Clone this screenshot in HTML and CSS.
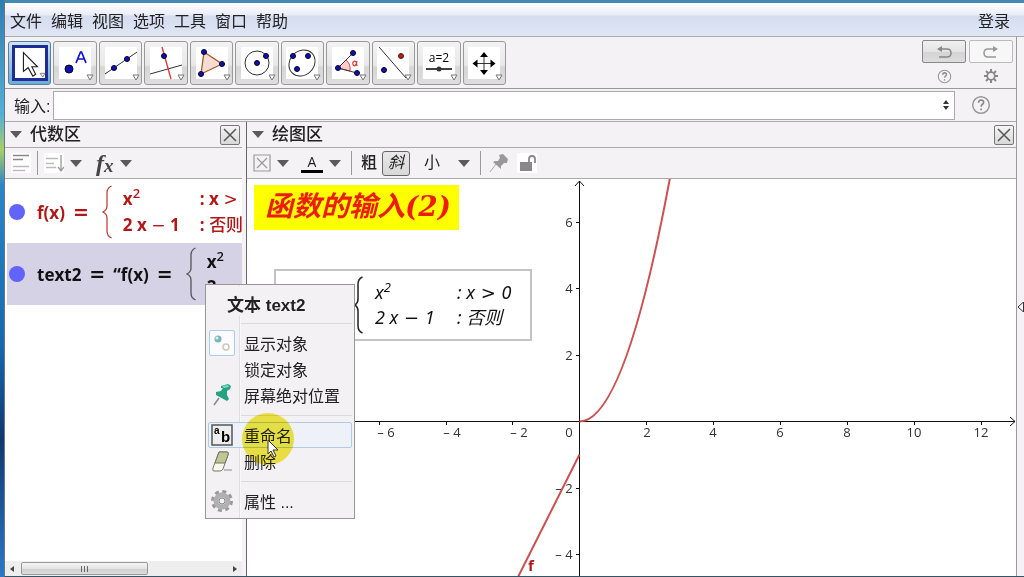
FILE: index.html
```html
<!DOCTYPE html>
<html lang="zh-CN">
  <head>
    <meta charset="UTF-8" />
    <meta name="viewport" content="width=device-width, initial-scale=1.0"/>
    <title>GeoGebra</title>
    <link rel="stylesheet" href="styles.css">
  </head>
  <body>
    <div class="window">
      <nav class="menubar">
        <button>文件</button>
        <button>编辑</button>
        <button>视图</button>
        <button>选项</button>
        <button>工具</button>
        <button>窗口</button>
        <button>帮助</button>
        <button class="login">登录</button>
      </nav>

      <div class="main">
        <div class="workspace">
          <div class="toolbar">
            <div class="tools">
              <button class="tool active" aria-label="移动">
                <svg viewBox="0 0 32 32"><path d="M9 5v20l5-4 5 9 3-2-4-8h6z" fill="#fff" stroke="#222" stroke-width="1.2"/><path class="more" d="M27 27h5l-2.500 4z"/></svg>
              </button>
              <button class="tool" aria-label="点">
                <svg viewBox="0 0 32 32"><circle class="pt" cx="10" cy="22" r="4"/><path d="M17 16l4.500-11h1l4.500 11M18.500 12h7" fill="none" stroke="#11c" stroke-width="1.700"/><path class="more" d="M28 28h6l-3 5z"/></svg>
              </button>
              <button class="tool" aria-label="直线">
                <svg viewBox="0 0 32 32"><path class="ln" d="M0 27L32 5"/><circle class="pt" cx="9" cy="21" r="2.500"/><circle class="pt" cx="22" cy="12" r="2.500"/><path class="more" d="M28 28h6l-3 5z"/></svg>
              </button>
              <button class="tool" aria-label="垂线">
                <svg viewBox="0 0 32 32"><path class="ln" d="M0 27L32 18"/><path d="M12 0l9 32" stroke="#d33" stroke-width="1.300"/><circle class="pt" cx="14" cy="9" r="2.500"/><path class="more" d="M28 28h6l-3 5z"/></svg>
              </button>
              <button class="tool" aria-label="多边形">
                <svg viewBox="0 0 32 32"><path d="M8 5l18 12L5 27z" fill="#f6ddd3" stroke="#a65a30" stroke-width="1.300"/><circle class="pt" cx="8" cy="5" r="2.500"/><circle class="pt" cx="26" cy="17" r="2.500"/><circle class="pt" cx="5" cy="27" r="2.500"/><path class="more" d="M28 28h6l-3 5z"/></svg>
              </button>
              <button class="tool" aria-label="圆">
                <svg viewBox="0 0 32 32"><circle class="ln" cx="16" cy="16" r="12"/><circle class="pt" cx="16" cy="16" r="2.500"/><circle class="pt" cx="25" cy="9" r="2.500"/><path class="more" d="M28 28h6l-3 5z"/></svg>
              </button>
              <button class="tool" aria-label="椭圆">
                <svg viewBox="0 0 32 32"><ellipse class="ln" cx="16" cy="16" rx="14" ry="12" transform="rotate(-45 16 16)"/><circle class="pt" cx="7" cy="9" r="2.500"/><circle class="pt" cx="22" cy="9" r="2.500"/><circle class="pt" cx="11" cy="22" r="2.500"/><path class="more" d="M28 28h6l-3 5z"/></svg>
              </button>
              <button class="tool" aria-label="角度">
                <svg viewBox="0 0 32 32"><path d="M6 21l8-8q5 4 4 11z" fill="#fcc" stroke="#d44"/><path class="ln" d="M21 6L6 21l19 5"/><circle class="pt" cx="21" cy="6" r="2.500"/><circle class="pt" cx="6" cy="21" r="2.500"/><circle class="pt" cx="25" cy="26" r="2.500"/><path d="M25 14q-1 6-3.500 4.500-2-3 1-4.500 2 0 2.500 5" fill="none" stroke="#d33" stroke-width="1.200"/><path class="more" d="M28 28h6l-3 5z"/></svg>
              </button>
              <button class="tool" aria-label="轴对称">
                <svg viewBox="0 0 32 32"><path class="ln" d="M2 0l27 31"/><circle class="pt" cx="7" cy="23" r="2.500"/><circle cx="24" cy="9" r="2.500" fill="#a22" stroke="#611"/><path class="more" d="M28 28h6l-3 5z"/></svg>
              </button>
              <button class="tool" aria-label="滑动条">
                <svg viewBox="0 0 32 32"><text class="slider-text" x="16" y="15" text-anchor="middle">a=2</text><path d="M3 22h26" stroke="#000" stroke-width="1.500"/><circle cx="16" cy="22" r="2.500" fill="#333"/><path class="more" d="M28 28h6l-3 5z"/></svg>
              </button>
              <button class="tool" aria-label="移动视图">
                <svg viewBox="0 0 32 32"><path d="M8 16.500h16M16 8v16" stroke="#333"/><path d="M16 5l4 5h-8zM16 28l4-5h-8zM4.500 16.500l5-4v8zM27.500 16.500l-5-4v8z" fill="#000"/><path class="more" d="M28 28h6l-3 5z"/></svg>
              </button>
            </div>
            <div class="side-tools">
              <button class="undo" aria-label="撤销"><svg width="18" height="14" viewBox="0 0 18 14"><path d="M5 4h7q4 0 4 4t-4 4H4" fill="none" stroke="#888" stroke-width="1.500"/><path d="M2 4l5-3v6z" fill="#888"/></svg></button>
              <button class="redo" aria-label="重做"><svg width="18" height="14" viewBox="0 0 18 14"><path d="M13 4H6Q2 4 2 8t4 4h8" fill="none" stroke="#999" stroke-width="1.500"/><path d="M16 4l-5-3v6z" fill="#999"/></svg></button>
              <button class="plain" aria-label="帮助"><svg width="15" height="15" viewBox="0 0 20 20"><use href="#help"/></svg></button>
              <button class="plain" aria-label="设置"><svg width="14" height="14" viewBox="0 0 14 14"><circle cx="7" cy="7" r="3.800" fill="none" stroke="#888" stroke-width="1.800"/><path d="M7 0v3M7 11v3M0 7h3M11 7h3M2 2l2.200 2.200M9.800 9.800L12 12M12 2L9.800 4.200M4.200 9.800L2 12" stroke="#888" stroke-width="2"/></svg></button>
            </div>
          </div>

          <form class="inputbar">
            <label for="command">输入:</label>
            <div class="field">
              <input type="text" id="command" />
              <svg width="6" height="12" viewBox="0 0 6 12"><path d="M0 5l3-4 3 4zM0 7h6l-3 4z" fill="#333"/></svg>
            </div>
            <button type="button" class="plain" aria-label="输入帮助">
              <svg width="20" height="20" viewBox="0 0 20 20"><g id="help"><circle cx="10" cy="10" r="8.300" fill="none" stroke="#999" stroke-width="1.500"/><path d="M7.500 7.800q.2-2.800 2.600-2.800 2.600.1 2.500 2.400 0 1.200-1.400 2.100-1 .7-1 2.200M10.100 13.500v1.800" fill="none" stroke="#888" stroke-width="1.700"/></g></svg>
            </button>
          </form>

          <div class="panels">
            <section class="algebra">
              <header class="panel-head">
                <span class="caret"></span>
                <h2>代数区</h2>
                <button class="close" aria-label="关闭"><svg width="14" height="14" viewBox="0 0 14 14"><path d="M1 1l12 12M13 1L1 13" stroke="#555" stroke-width="1.500"/></svg></button>
              </header>
              <div class="panel-tools">
                <button class="icon" aria-label="辅助对象"><svg width="20" height="20" viewBox="0 0 20 20"><path fill="#fff" d="M0 0h20v20H0z"/><path d="M2 2.500h16M2 6.500h10" stroke="#888" stroke-width="1.300"/><path d="M2 13.500h16M2 17.500h12" stroke="#bbb" stroke-width="1.300"/></svg></button>
                <span class="divider"></span>
                <button class="icon" aria-label="排序"><svg width="20" height="20" viewBox="0 0 20 20"><path fill="#fff" d="M0 0h20v20H0z"/><path d="M2 5.500h12M2 10.500h8M2 14.500h10" stroke="#bbb" stroke-width="1.300"/><path d="M17 2v15M14 14l3 4 3-4" fill="none" stroke="#999" stroke-width="1.300"/></svg></button>
                <span class="caret"></span>
                <button class="icon fx">f<sub>x</sub></button>
                <span class="caret"></span>
              </div>
              <div class="expressions">
                <div class="expr red">
                  <span class="marble"></span>
                  <span>f(x)</span><span class="eq">=</span>
                  <svg class="brace" width="10" height="54" viewBox="0 0 10 54"><path d="M9.500 1Q5 3 5 8v13q0 4-4 6 4 2 4 6v13q0 5 4.500 7" fill="none" stroke="#b33" stroke-width="1.200"/></svg>
                  <div class="cases">
                    <span>x<sup>2</sup></span><span>: x <i class="op">&gt;</i></span>
                    <span>2 x <i class="op">−</i> 1</span><span>: <b>否则</b></span>
                  </div>
                </div>
                <div class="expr selected">
                  <span class="marble"></span>
                  <span>text2</span><span class="eq">=</span>
                  <span>“f(x)</span><span class="eq">=</span>
                  <svg class="brace" width="10" height="54" viewBox="0 0 10 54"><path d="M9.500 1Q5 3 5 8v13q0 4-4 6 4 2 4 6v13q0 5 4.500 7" fill="none" stroke="#555" stroke-width="1.300"/></svg>
                  <div class="cases single">
                    <span>x<sup>2</sup></span>
                    <span>2</span>
                  </div>
                </div>
              </div>
              <div class="scrollbar">
                <svg width="4" height="8" viewBox="0 0 4 8"><path d="M4 1v6L0 4z" fill="#444"/></svg>
                <div class="track"><div class="thumb"><i></i></div></div>
                <svg width="4" height="8" viewBox="0 0 4 8"><path d="M0 1v6l4-3z" fill="#444"/></svg>
              </div>
            </section>

            <section class="graphics">
              <header class="panel-head">
                <span class="caret"></span>
                <h2>绘图区</h2>
                <button class="close" aria-label="关闭"><svg width="14" height="14" viewBox="0 0 14 14"><path d="M1 1l12 12M13 1L1 13" stroke="#555" stroke-width="1.500"/></svg></button>
              </header>
              <div class="panel-tools">
                <button class="icon" aria-label="背景颜色"><svg width="18" height="18" viewBox="0 0 18 18"><path d="M1 1h16v16H1zM4 4l10 10M14 4L4 14" fill="none" stroke="#999" stroke-width="1.200"/></svg></button>
                <span class="caret"></span>
                <button class="icon color">A</button>
                <span class="caret"></span>
                <span class="divider"></span>
                <button class="style-btn bold">粗</button>
                <button class="style-btn pressed">斜</button>
                <button class="style-btn size">小</button>
                <span class="caret"></span>
                <span class="divider"></span>
                <button class="icon pin" aria-label="固定"><svg width="20" height="20" viewBox="0 0 20 20"><path d="M10 2l4-1 5 5-1 4-3 0-3 3 0 3-8-7 2-1 3 0 2-3z" fill="#999"/><path d="M7 11l-6 8" stroke="#aaa"/></svg></button>
                <button class="icon" aria-label="锁定"><svg width="20" height="20" viewBox="0 0 20 20"><path fill="#fff" d="M0 0h20v20H0z"/><path d="M3 9h12v9H3z" fill="#888"/><path d="M12 9V6q0-3 3-3t3 3v4" fill="none" stroke="#888" stroke-width="1.800"/></svg></button>
              </div>
              <div class="canvas">
                <svg class="plot" viewBox="0 0 769 397" preserveAspectRatio="xMinYMin slice">
                  <g class="axes">
                    <path d="M0 242.500h768M332.500 2v395M763 238l5 4.500-5 4.500M328 7l4.500-5 4.500 5"/>
                    <path d="M132.500 242v4M199.500 242v4M265.500 242v4M399.500 242v4M466.500 242v4M533.500 242v4M600.500 242v4M667.500 242v4M734.500 242v4M329 43.500h4M329 109.500h4M329 176.500h4M329 309.500h4M329 375.500h4"/>
                  </g>
                  <g class="labels">
                    <text x="139" y="258">– 6</text>
                    <text x="205" y="258">– 4</text>
                    <text x="272" y="258">– 2</text>
                    <text x="322" y="258">0</text>
                    <text x="400" y="258">2</text>
                    <text x="466" y="258">4</text>
                    <text x="533" y="258">6</text>
                    <text x="600" y="258">8</text>
                    <text x="667" y="258">10</text>
                    <text x="734" y="258">12</text>
                    <text x="322" y="48">6</text>
                    <text x="322" y="114">4</text>
                    <text x="322" y="181">2</text>
                    <text x="317" y="314">– 2</text>
                    <text x="317" y="380">– 4</text>
                  </g>
                  <path class="curve" d="M332.500 242.500Q378 242.500 423.500-4M332.500 275.500L271 398"/>
                  <text class="fname" x="281" y="392">f</text>
                </svg>
                <div class="title-text">函数的输入(2)</div>
                <div class="formula">
                  <svg width="8" height="58" viewBox="0 0 8 58"><path d="M7.500 1Q3 3 3 8v15q0 4-3 6 3 2 3 6v15q0 5 4.500 7" fill="none" stroke="#222" stroke-width="1.500"/></svg>
                  <div class="cases">
                    <span>x<sup>2</sup></span><span>: x <i class="op">&gt;</i> 0</span>
                    <span>2 x <i class="op">−</i> 1</span><span>: 否则</span>
                  </div>
                </div>
              </div>
            </section>
          </div>
        </div>
        <button class="drawer" aria-label="侧栏"><svg width="7" height="10" viewBox="0 0 7 10"><path d="M6.500 0L1 5l5.500 5z" fill="#fff" stroke="#333"/></svg></button>
      </div>
    </div>

    <div class="context-menu">
      <h3>文本 text2</h3>
      <hr>
      <button class="item"><span class="item-icon checked"><svg width="24" height="24" viewBox="0 0 24 24"><circle cx="8" cy="8" r="3.500" fill="#7ab5b5"/><circle cx="7" cy="7" r="1.500" fill="#d5eeee"/><circle cx="16" cy="16" r="3" fill="#fff" stroke="#ccc8b8" stroke-width="1.500"/></svg></span>显示对象</button>
      <button class="item"><span class="item-icon"></span>锁定对象</button>
      <button class="item"><span class="item-icon"><svg width="24" height="24" viewBox="0 0 24 24"><path d="M9 15l-5 7" stroke="#888" stroke-width="1.500"/><path d="M11 3l7-2 3 2-1 3-3 2 0 4 2 4-2 2-11-6 0-3 5-1 2-3-2 0z" fill="#25a184"/><path d="M12 3l6-1 1 2-5 1z" fill="#7dd9c0"/></svg></span>屏幕绝对位置</button>
      <hr>
      <button class="item hover"><span class="item-icon"><svg width="22" height="22" viewBox="0 0 22 22"><path d="M1 1h20v20H1z" fill="#eee" stroke="#555" stroke-width="1.500"/><text class="ab" x="3" y="10">a</text><text class="ab big" x="10" y="18">b</text></svg></span>重命名</button>
      <button class="item"><span class="item-icon"><svg width="24" height="24" viewBox="0 0 24 24"><path d="M9 3h8q2 0 1 3l-5 14q-1 2-3 2H4q-2 0-1-3z" fill="#fafaf3" stroke="#77775c"/><path d="M9 3h8q2 0 1 3l-3 8H5z" fill="#bfc795" stroke="#77775c"/><path d="M14 21h8" stroke="#888"/></svg></span>删除</button>
      <hr>
      <button class="item"><span class="item-icon"><svg width="24" height="24" viewBox="0 0 24 24"><circle cx="12" cy="12" r="9.500" fill="none" stroke="#999" stroke-width="3" stroke-dasharray="4 3.460"/><circle cx="12" cy="12" r="6" fill="none" stroke="#b0b0b0" stroke-width="5"/><circle cx="12" cy="12" r="3" fill="#f4f1f5" stroke="#888"/></svg></span>属性 ...</button>
      <div class="click-spot"></div>
      <svg class="pointer" width="12" height="19" viewBox="0 0 12 19"><path d="M1 1v14l3-3 3 6 2-1-3-6h5z" fill="#fff" stroke="#333"/></svg>
    </div>
  </body>
</html>
```
FILE: styles.css
```css
* {
  box-sizing: border-box;
}

body {
  margin: 0;
  height: 100vh;
  overflow: hidden;
  font-family: "Liberation Sans", "Noto Sans CJK SC", sans-serif;
  font-size: 16px;
  color: #222;
  background: linear-gradient(#2f7db0, #55b0d8 20%, #a8d060 26%, #2a86c8 32%, #1668b0 60%, #103870 76%, #2a78c8);
}

button {
  font: inherit;
  color: inherit;
  padding: 0;
  border: none;
  background: none;
}

svg {
  display: block;
}

.window {
  height: 100vh;
  margin-left: 4px;
  border-top: 3px solid #4489b4;
  border-left: 1px solid #678;
  border-bottom: 1px solid #345566;
  background: #f5f2f6;
  display: flex;
  flex-direction: column;
}

.menubar {
  display: flex;
  align-items: center;
  gap: 9px;
  height: 34px;
  padding: 0 14px 0 5px;
  background: linear-gradient(#fff, #e9edf7 35%, #d5dcef 40%, #dfe7f5);
  border-bottom: 1px solid #aaa;
}

.login {
  margin-left: auto;
}

.main {
  flex: 1;
  display: flex;
  min-height: 0;
}

.workspace {
  flex: 1;
  min-width: 0;
  display: flex;
  flex-direction: column;
  border-right: 1px solid #999;
}

.drawer {
  width: 7px;
  display: flex;
  align-items: center;
}

/* toolbar */
.toolbar {
  display: flex;
  justify-content: space-between;
  height: 52px;
  padding: 3px 3px 0 3px;
  border-bottom: 1px solid #999;
}

.tools {
  display: grid;
  grid-template-columns: repeat(11, 1fr);
  gap: 2px;
  width: 498px;
  height: 44px;
  margin-top: 1px;
}

.tool {
  display: flex;
  align-items: center;
  justify-content: center;
  border: 1px solid #999;
  border-radius: 3px;
  background: linear-gradient(#f3f3f3, #e8e8e8 55%, #d6d6d6 60%, #dedede);
}

.tool svg {
  width: 32px;
  height: 32px;
  background: #fff;
  overflow: visible;
}

.tool.active {
  background: linear-gradient(#cfe4f3, #9cc6e4 50%, #6cadd8);
  border-color: #567f9c;
}

.tool.active svg {
  width: 36px;
  height: 36px;
  border: 3px solid #1e2c96;
}

.pt {
  fill: #11a;
  stroke: #003;
}

.ln {
  fill: none;
  stroke: #333;
}

.more {
  fill: #fff;
  stroke: #777;
}

.slider-text {
  font: 12px "Open Sans", sans-serif;
}

.side-tools {
  display: grid;
  grid-template-columns: 44px 44px;
  grid-template-rows: 23px 24px;
  gap: 1px 3px;
}

.undo,
.redo,
.plain {
  display: flex;
  align-items: center;
  justify-content: center;
}

.undo {
  border: 1px solid #888;
  border-radius: 2px;
  background: linear-gradient(#f0f0f0, #e4e4e4 50%, #d4d4d4 55%, #ddd);
}

.redo {
  border: 1px solid #bbb;
  border-radius: 2px;
  background: #f8f7f8;
}

/* input bar */
.inputbar {
  display: flex;
  align-items: center;
  height: 33px;
  padding-left: 9px;
  border-bottom: 1px solid #aaa;
}

.field {
  flex: 1;
  display: flex;
  align-items: center;
  height: 29px;
  margin-left: 3px;
  padding-right: 5px;
  background: #fff;
  border: 1px solid #aaa;
}

.field input {
  flex: 1;
  min-width: 0;
  height: 26px;
  border: none;
  outline: none;
  background: none;
  font: inherit;
}

.inputbar .plain {
  width: 61px;
  padding-right: 10px;
}

/* panels */
.panels {
  flex: 1;
  display: flex;
  min-height: 0;
}

.algebra {
  flex: 0 0 242px;
  min-width: 0;
  display: flex;
  flex-direction: column;
  padding-right: 4px;
  border-right: 1px solid #666;
}

.graphics {
  flex: 1;
  min-width: 0;
  display: flex;
  flex-direction: column;
}

.panel-head {
  display: flex;
  align-items: center;
  height: 26px;
  padding: 0 2px 0 5px;
  border-bottom: 1px solid #aaa;
}

.panel-head h2 {
  margin: 0 auto 0 8px;
  font-size: 17px;
  font-weight: 500;
  line-height: 24px;
}

.caret {
  width: 0;
  border: 6px solid transparent;
  border-top: 7px solid #5a5a5a;
  border-bottom: 0;
}

.close {
  width: 20px;
  height: 20px;
  display: flex;
  align-items: center;
  justify-content: center;
  border: 1px solid #777;
  border-radius: 2px;
  background: linear-gradient(#f4f4f4, #d8d8d8);
}

.panel-tools {
  display: flex;
  align-items: center;
  gap: 6px;
  height: 31px;
  padding: 0 6px;
  border-bottom: 1px solid #aaa;
}

.divider {
  width: 1px;
  height: 24px;
  background: #999;
}

.fx {
  margin-left: 8px;
  font: italic bold 24px/28px "Liberation Serif", serif;
  color: #444;
}

.fx sub {
  font-size: 19px;
  line-height: 0;
  vertical-align: -1px;
}

.color {
  width: 22px;
  margin-left: 6px;
  border-bottom: 3px solid #000;
  font: 14px/16px "Open Sans", sans-serif;
}

.color + .caret {
  margin-right: 4px;
}

.style-btn {
  width: 28px;
  height: 25px;
  line-height: 22px;
  font-size: 16px;
}

.bold {
  width: 22px;
  font-weight: 500;
}

.pressed {
  font-style: italic;
  border: 1px solid #666;
  border-radius: 3px;
  background: linear-gradient(#e8e8e8, #d8d8d8);
  margin-left: -4px;
}

.size {
  margin: 0 6px 0 2px;
}

.size + .caret {
  margin-right: 4px;
}

.pin {
  margin: 0 2px;
}

/* algebra view */
.expressions {
  flex: 1;
  overflow: hidden;
  padding: 2px 0 0 2px;
  background: #fff;
  font-family: "Open Sans", "Noto Sans CJK SC", sans-serif;
  font-size: 17px;
  font-weight: bold;
  color: #111;
}

.expr {
  display: flex;
  align-items: center;
  height: 62px;
  padding-left: 2px;
  white-space: nowrap;
}

.red {
  color: #b01818;
}

.selected {
  background: #d5d2e5;
}

.marble {
  flex: none;
  width: 16px;
  height: 16px;
  margin-right: 12px;
  border-radius: 50%;
  background: #6163fa;
}

.eq {
  margin: 0 8px;
  font-family: "DejaVu Sans", sans-serif;
  font-size: 19px;
}

.op {
  font-family: "DejaVu Sans", sans-serif;
  font-style: normal;
  font-weight: normal;
}

.brace {
  flex: none;
  margin-left: 5px;
}

.cases {
  display: grid;
  grid-template-columns: 77px auto;
  margin-left: 11px;
  line-height: 25px;
}

.cases.single {
  grid-template-columns: auto;
}

.cases b {
  font-weight: 500;
}

sup {
  font-size: 13px;
  font-weight: 600;
  line-height: 0;
}

.scrollbar {
  display: flex;
  align-items: center;
  gap: 7px;
  height: 15px;
  padding: 0 5px;
  background: #eee;
}

.track {
  flex: 1;
}

.thumb {
  width: 62%;
  height: 13px;
  border: 1px solid #999;
  border-radius: 2px;
  background: linear-gradient(#f5f5f5, #e4e4e4 50%, #d0d0d0 55%, #ddd);
  display: flex;
  align-items: center;
  justify-content: center;
}

.thumb i {
  width: 7px;
  height: 6px;
  background: repeating-linear-gradient(90deg, #666 0 1px, transparent 1px 3px);
}

/* graphics view */
.canvas {
  flex: 1;
  min-height: 0;
  position: relative;
  overflow: hidden;
  background: #fff;
}

.plot {
  width: 100%;
  height: 100%;
}

.axes path {
  fill: none;
  stroke: #111;
}

.labels {
  font: 13px "Open Sans", sans-serif;
  fill: #333;
  text-anchor: middle;
}

.curve {
  fill: none;
  stroke: #cc5050;
  stroke-width: 2;
}

.fname {
  font: bold 15px "Open Sans", sans-serif;
  fill: #b01818;
}

.title-text {
  position: absolute;
  left: 7px;
  top: 6px;
  height: 45px;
  padding: 0 8px 0 11px;
  background: #ff0;
  color: #ee1c0c;
  font: italic bold 28px/43px "DejaVu Serif", "Noto Sans CJK SC", serif;
  white-space: nowrap;
}

.formula {
  position: absolute;
  left: 27px;
  top: 90px;
  width: 258px;
  height: 72px;
  padding-left: 79px;
  display: flex;
  align-items: center;
  border: 2px solid #c4c4c4;
  background: #fff;
  color: #111;
  font: italic 18px "Noto Sans", "Noto Sans CJK SC", sans-serif;
  white-space: nowrap;
}

.formula .cases {
  grid-template-columns: 82px auto;
  margin-left: 12px;
}

.formula .op {
  margin: 0 1px;
}

.formula sup {
  font-weight: normal;
}

/* context menu */
.context-menu {
  position: absolute;
  left: 205px;
  top: 284px;
  width: 150px;
  padding: 1px 2px 4px;
  border: 1px solid #979797;
  background: linear-gradient(90deg, #f4f1f5 33px, #e0dde1 33px, #e0dde1 34px, #fff 34px, #f4f1f5 35px);
}

.context-menu h3 {
  margin: 0;
  padding-left: 19px;
  font-size: 17px;
  line-height: 40px;
  height: 30px;
  background: #f4f1f5;
}

.context-menu hr {
  height: 1px;
  margin: 7px 0 6px 33px;
  border: none;
  background: #dcd9dd;
}

.item {
  display: flex;
  align-items: center;
  width: 100%;
  height: 26px;
  border: 1px solid transparent;
  border-radius: 2px;
  white-space: nowrap;
}

.item-icon {
  flex: none;
  width: 26px;
  height: 26px;
  margin-right: 9px;
  display: flex;
  align-items: center;
  justify-content: center;
}

.checked {
  border: 1px solid #a9cdee;
  border-radius: 2px;
  background: #fbfbfe;
}

.hover {
  border-color: #aecbe8;
  background: #eef1f8;
}

.ab {
  font: bold 10px "Liberation Sans", sans-serif;
}

.big {
  font-size: 15px;
}

.click-spot {
  position: absolute;
  left: 36px;
  top: 128px;
  width: 52px;
  height: 52px;
  border-radius: 50%;
  background: #f4ea48;
  mix-blend-mode: multiply;
}

.pointer {
  position: absolute;
  left: 61px;
  top: 154px;
}
```
